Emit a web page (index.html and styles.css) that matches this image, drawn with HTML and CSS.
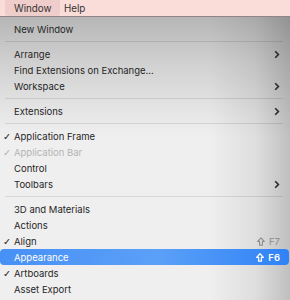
FILE: index.html
```html
<!DOCTYPE html>
<html>
<head>
<meta charset="utf-8">
<link rel="stylesheet" href="styles.css">
</head>
<body>
<div class="menubar">
  <span class="mb-item active">Window</span>
  <span class="mb-item">Help</span>
</div>
<div class="menu">
  <div class="item"><span class="check"></span><span class="label">New Window</span></div>
  <div class="sep"></div>
  <div class="item"><span class="check"></span><span class="label">Arrange</span><svg class="chev" width="6" height="9" viewBox="0 0 6 9"><path d="M1.2 1.2 L4.4 4.5 L1.2 7.8" fill="none" stroke="#2a2a2a" stroke-width="1.6"/></svg></div>
  <div class="item"><span class="check"></span><span class="label">Find Extensions on Exchange...</span></div>
  <div class="item"><span class="check"></span><span class="label">Workspace</span><svg class="chev" width="6" height="9" viewBox="0 0 6 9"><path d="M1.2 1.2 L4.4 4.5 L1.2 7.8" fill="none" stroke="#2a2a2a" stroke-width="1.6"/></svg></div>
  <div class="sep"></div>
  <div class="item"><span class="check"></span><span class="label">Extensions</span><svg class="chev" width="6" height="9" viewBox="0 0 6 9"><path d="M1.2 1.2 L4.4 4.5 L1.2 7.8" fill="none" stroke="#2a2a2a" stroke-width="1.6"/></svg></div>
  <div class="sep"></div>
  <div class="item"><span class="check">✓</span><span class="label">Application Frame</span></div>
  <div class="item disabled"><span class="check">✓</span><span class="label">Application Bar</span></div>
  <div class="item"><span class="check"></span><span class="label">Control</span></div>
  <div class="item"><span class="check"></span><span class="label">Toolbars</span><svg class="chev" width="6" height="9" viewBox="0 0 6 9"><path d="M1.2 1.2 L4.4 4.5 L1.2 7.8" fill="none" stroke="#2a2a2a" stroke-width="1.6"/></svg></div>
  <div class="sep"></div>
  <div class="item"><span class="check"></span><span class="label">3D and Materials</span></div>
  <div class="item"><span class="check"></span><span class="label">Actions</span></div>
  <div class="item"><span class="check">✓</span><span class="label">Align</span><span class="shortcut"><svg class="shift" width="8" height="9" viewBox="0 0 8 9"><path d="M4 0.8 L7.3 4.4 H5.4 V8.2 H2.6 V4.4 H0.7 Z" fill="none" stroke="currentColor" stroke-width="1.1" stroke-linejoin="round"/></svg>F7</span></div>
  <div class="item selected"><span class="check"></span><span class="label">Appearance</span><span class="shortcut"><svg class="shift" width="8" height="9" viewBox="0 0 8 9"><path d="M4 0.8 L7.3 4.4 H5.4 V8.2 H2.6 V4.4 H0.7 Z" fill="none" stroke="currentColor" stroke-width="1.3" stroke-linejoin="round"/></svg>F6</span></div>
  <div class="item"><span class="check">✓</span><span class="label">Artboards</span></div>
  <div class="item"><span class="check"></span><span class="label">Asset Export</span></div>
</div>
</body>
</html>
```
FILE: styles.css
```css
html, body {
  margin: 0;
  padding: 0;
}
body {
  width: 290px;
  height: 300px;
  overflow: hidden;
  font-family: Inter, "Noto Sans", "Liberation Sans", sans-serif;
  font-size: 9.5px;
  color: #262626;
  background: #efefef;
}
.menubar {
  height: 16px;
  background: #fadcd8;
  border-bottom: 1px solid #8e8684;
  display: flex;
  align-items: stretch;
  padding-left: 5px;
}
.mb-item {
  display: flex;
  align-items: center;
  padding: 0 0 0 4px;
  font-size: 9.8px;
  color: #333333;
}
.mb-item.active {
  background: #eecdca;
  border-radius: 0 0 3px 3px;
  width: 55px;
  box-sizing: border-box;
  padding: 0 0 0 9px;
}
.menu {
  height: 283px;
  padding-top: 4px;
  background:
    linear-gradient(to bottom, rgba(0,0,0,0.24) 0, rgba(0,0,0,0.13) 45px, rgba(0,0,0,0.03) 100px, rgba(0,0,0,0) 120px),
    linear-gradient(to right, rgba(0,0,0,0) 72%, rgba(0,0,0,0.07) 88%, rgba(0,0,0,0.2) 100%),
    #efefef;
}
.item {
  height: 16px;
  display: flex;
  align-items: center;
  padding-right: 9px;
  margin-right: 1px;
  border-radius: 4px;
}
.check {
  width: 14px;
  flex: none;
  text-align: center;
  padding-left: 0;
  box-sizing: border-box;
  font-size: 9.5px;
  font-family: "DejaVu Sans", sans-serif;
}
.label {
  flex: 1;
  white-space: nowrap;
}
.disabled {
  color: #b4b4b4;
}
.chev {
  flex: none;
  margin-right: 0;
}
.shortcut {
  display: flex;
  align-items: center;
  gap: 4px;
  color: #8c8c8c;
  font-size: 9.5px;
  padding-right: 0;
}
.selected {
  background: linear-gradient(to right, #4790f5 0%, #5ba0f8 55%, #2f82f6 100%);
  color: #ffffff;
}
.selected .shortcut {
  color: #ffffff;
  font-weight: 600;
}
.sep {
  height: 9px;
  display: flex;
  align-items: center;
  padding: 0 7px 0 5px;
}
.sep::before {
  content: "";
  flex: 1;
  height: 1px;
  background: rgba(0,0,0,0.1);
}
```
